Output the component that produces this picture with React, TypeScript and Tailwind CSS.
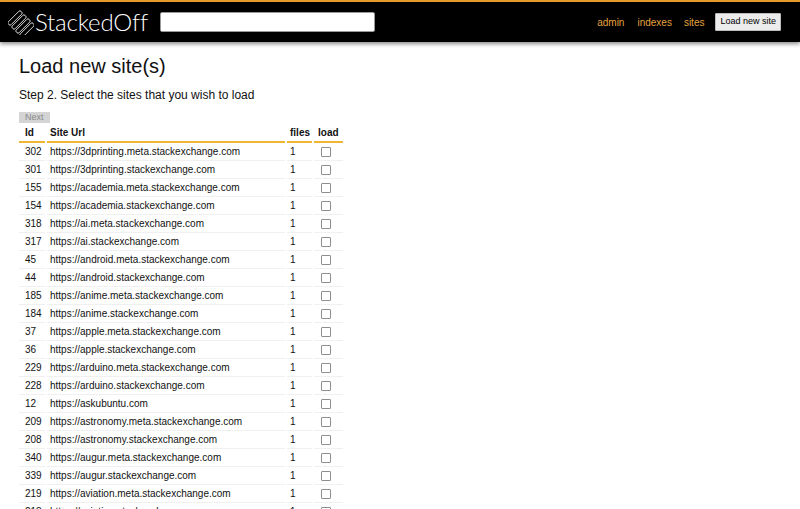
const sites: [number, string][] = [
  [302, "https://3dprinting.meta.stackexchange.com"],
  [301, "https://3dprinting.stackexchange.com"],
  [155, "https://academia.meta.stackexchange.com"],
  [154, "https://academia.stackexchange.com"],
  [318, "https://ai.meta.stackexchange.com"],
  [317, "https://ai.stackexchange.com"],
  [45, "https://android.meta.stackexchange.com"],
  [44, "https://android.stackexchange.com"],
  [185, "https://anime.meta.stackexchange.com"],
  [184, "https://anime.stackexchange.com"],
  [37, "https://apple.meta.stackexchange.com"],
  [36, "https://apple.stackexchange.com"],
  [229, "https://arduino.meta.stackexchange.com"],
  [228, "https://arduino.stackexchange.com"],
  [12, "https://askubuntu.com"],
  [209, "https://astronomy.meta.stackexchange.com"],
  [208, "https://astronomy.stackexchange.com"],
  [340, "https://augur.meta.stackexchange.com"],
  [339, "https://augur.stackexchange.com"],
  [219, "https://aviation.meta.stackexchange.com"],
  [218, "https://aviation.stackexchange.com"],
  [350, "https://avp.meta.stackexchange.com"],
];

const Logo = () => (
  <svg width="26" height="26" viewBox="0 0 26 26" className="shrink-0">
    {[0, 1, 2, 3].map((i) => (
      <rect
        key={i}
        x={-9}
        y={-2}
        width={18}
        height={4}
        rx={1.5}
        fill="none"
        stroke="#e5e5e5"
        strokeWidth={0.9}
        transform={`translate(${7 + i * 4} ${9 + i * 4}) rotate(-45)`}
      />
    ))}
  </svg>
);

const Header = () => (
  <header className="border-t-2 border-[#e39a2b] bg-black h-[42px] flex items-center px-2 shadow-[0_2px_4px_rgba(0,0,0,0.45)]">
    <div className="flex items-center gap-[1px]">
      <Logo />
      <span className="font-['Lato',sans-serif] font-light text-white text-[24px] leading-none tracking-[-0.2px]">
        StackedOff
      </span>
    </div>
    <input
      type="text"
      className="ml-[12px] w-[215px] h-[20px] bg-white rounded-[2px] border border-[#999] outline-none"
    />
    <nav className="ml-auto flex items-center text-[10px] text-[#e6a33e] font-['Liberation_Sans',Arial,sans-serif] pr-[11px]">
      <a href="#">admin</a>
      <a href="#" className="ml-[13px]">indexes</a>
      <a href="#" className="ml-[12px]">sites</a>
      <button className="ml-[11px] bg-[#ececec] text-black text-[9px] px-[4px] h-[18px] border border-[#bbb] rounded-[1px]">
        Load new site
      </button>
    </nav>
  </header>
);

export default function App() {
  return (
    <div className="min-h-screen bg-white font-['Liberation_Sans',Arial,sans-serif] text-[#111]">
      <Header />
      <main className="px-[19px] pt-[12px]">
        <h1 className="text-[20px] leading-[24px]">Load new site(s)</h1>
        <p className="mt-[10px] text-[12px] leading-[14px]">Step 2. Select the sites that you wish to load</p>
        <button
          disabled
          className="mt-[10px] block bg-[#d4d4d4] text-[#8a8a8a] text-[9px] leading-[11px] px-[6px]"
        >
          Next
        </button>
        <table className="mt-[1px] table-fixed w-[328px] border-separate border-spacing-x-[2px] border-spacing-y-0 -ml-[2px] text-[10px]">
          <thead>
            <tr>
              <th className="text-left font-bold pl-[6px] h-[19px] border-b-2 border-[#f2b636] w-[26px]">Id</th>
              <th className="text-left font-bold pl-[3px] h-[19px] border-b-2 border-[#f2b636] w-[238px]">Site Url</th>
              <th className="text-left font-bold pl-[3px] h-[19px] border-b-2 border-[#f2b636] w-[25px]">files</th>
              <th className="text-left font-bold pl-[4px] h-[19px] border-b-2 border-[#f2b636] w-[29px]">load</th>
            </tr>
          </thead>
          <tbody>
            {sites.map(([id, url]) => (
              <tr key={id}>
                <td className="h-[18px] pl-[6px] border-b border-[#f0f0f0]">{id}</td>
                <td className="h-[18px] pl-[3px] border-b border-[#f0f0f0] whitespace-nowrap">{url}</td>
                <td className="h-[18px] pl-[3px] border-b border-[#f0f0f0]">1</td>
                <td className="h-[18px] pl-[7px] border-b border-[#f0f0f0]">
                  <input
                    type="checkbox"
                    className="appearance-none block w-[10px] h-[10px] m-0 bg-white border border-[#8e8e8e] rounded-[1px] checked:bg-[#3b82f6]"
                  />
                </td>
              </tr>
            ))}
          </tbody>
        </table>
      </main>
    </div>
  );
}
